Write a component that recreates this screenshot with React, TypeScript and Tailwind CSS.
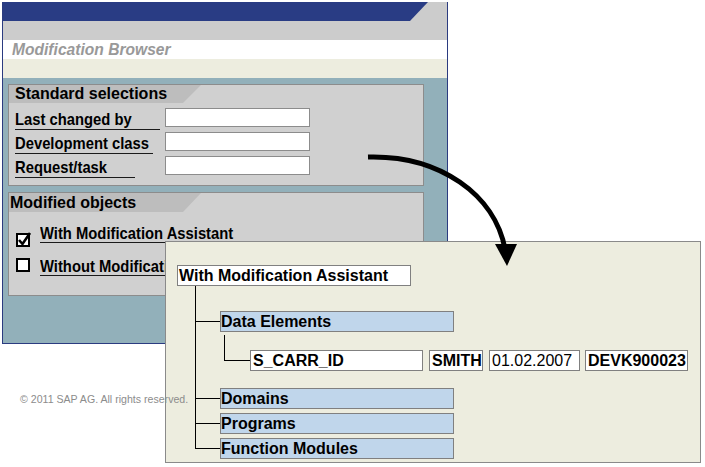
import React from "react";

const FONT = "font-['Liberation_Sans',Arial,Helvetica,sans-serif]";

function FieldRow({ label, line }: { label: string; line: string }) {
  return (
    <div className="flex h-[24px] items-start">
      <div className="w-[150px]">
        <div className={`${line} h-[22px] border-b border-[#1a1a1a] pt-[3px] leading-[18px]`}>
          <span className="inline-block origin-left scale-x-[0.87] whitespace-nowrap text-[17px] font-bold text-black">
            {label}
          </span>
        </div>
      </div>
      <div className="h-[19px] w-[145px] border border-[#8c8c8c] bg-white" />
    </div>
  );
}

function Tab({ text, pad, h }: { text: string; pad: string; h: string }) {
  return (
    <div
      className={`${h} w-[192px] bg-[#bdbdbd] ${pad} text-[16px] font-bold text-black [clip-path:polygon(0_0,192px_0,174px_100%,0_100%)]`}
    >
      {text}
    </div>
  );
}

function Check({ checked }: { checked?: boolean }) {
  return (
    <div className="relative h-[14px] w-[14px] shrink-0 border-2 border-black bg-white">
      {checked && (
        <svg className="absolute -left-[2px] -top-[5px] overflow-visible" width="16" height="18" viewBox="0 0 16 18">
          <polyline points="3,10 6.5,14 14,3" fill="none" stroke="black" strokeWidth="2.6" />
        </svg>
      )}
    </div>
  );
}

function Box({ text, w, bold = true, blue, pl = "pl-0" }: { text: string; w: string; bold?: boolean; blue?: boolean; pl?: string }) {
  return (
    <div
      className={`${w} h-[21px] shrink-0 border border-[#808080] ${blue ? "bg-[#c0d6eb]" : "bg-white"} ${pl} whitespace-nowrap text-[16px] leading-[19px] text-black ${bold ? "font-bold" : "font-normal"}`}
    >
      {text}
    </div>
  );
}

function Branch({ children, mt }: { children: React.ReactNode; mt: string }) {
  return (
    <div className={`flex items-center ${mt}`}>
      <div className="h-px w-[25px] bg-black" />
      {children}
    </div>
  );
}

export default function App() {
  return (
    <div className={`relative h-[467px] w-[705px] overflow-hidden bg-white ${FONT}`}>
      {/* main SAP window */}
      <div className="absolute left-[2px] top-[2px] flex h-[342px] w-[446px] flex-col border-x border-b border-[#2b3b80] bg-[#92b0ba]">
        <div className="h-[19px] bg-[#cccccc]">
          <div className="h-full bg-[#293c84] [clip-path:polygon(0_0,425px_0,407px_100%,0_100%)]" />
        </div>
        <div className="h-[19px] bg-[#cccccc]" />
        <div className="h-[19px] bg-white pl-[9px] text-[15.6px] font-bold italic leading-[20px] text-[#999999]">
          Modification Browser
        </div>
        <div className="h-[19px] bg-[#ededdf]" />
        <div className="flex-1 px-[5px] pt-[6px]">
          <div className="h-[102px] w-[416px] border border-[#8c8c8c] bg-[#d0d0d0]">
            <Tab text="Standard selections" pad="pl-[6px]" h="h-[18px] leading-[18px]" />
            <div className="pl-[6px] pt-[5px]">
              <FieldRow label="Last changed by" line="w-[145px]" />
              <FieldRow label="Development class" line="w-[138px]" />
              <FieldRow label="Request/task" line="w-[120px]" />
            </div>
          </div>
          <div className="mt-[6px] h-[104px] w-[416px] border border-[#8c8c8c] bg-[#d0d0d0]">
            <Tab text="Modified objects" pad="pl-[1px]" h="h-[19px] leading-[19px]" />
            <div className="pl-[7px] pt-[13px]">
              <div className="flex items-start">
                <div className="mt-[8px]">
                  <Check checked />
                </div>
                <div className="ml-[10px] h-[18px] border-b border-[#1a1a1a] leading-[17px]">
                  <span className="inline-block origin-left scale-x-[0.87] whitespace-nowrap text-[17px] font-bold text-black">
                    With Modification Assistant
                  </span>
                </div>
              </div>
              <div className="mt-[11px] flex items-start">
                <Check />
                <div className="ml-[10px] h-[18px] w-[230px] border-b border-[#1a1a1a] leading-[17px]">
                  <span className="inline-block origin-left scale-x-[0.87] whitespace-nowrap text-[17px] font-bold text-black">
                    Without Modification Assistant
                  </span>
                </div>
              </div>
            </div>
          </div>
        </div>
      </div>

      {/* detail window */}
      <div className="absolute left-[165px] top-[241px] h-[222px] w-[536px] border border-[#8a8a8a] bg-[#ededdf] pl-[11px] pt-[23px]">
        <Box text="With Modification Assistant" w="w-[234px]" pl="pl-[1px]" />
        <div className="relative ml-[18px] flex flex-col pt-[25px]">
          <div className="absolute bottom-[10px] left-0 top-0 w-px bg-black" />
          <Branch mt="mt-0">
            <Box text="Data Elements" w="w-[234px]" blue />
          </Branch>
          <div className="relative ml-[29px] mt-[3px]">
            <div className="absolute left-0 top-0 h-[26px] w-px bg-black" />
            <div className="flex items-center pt-[15px]">
              <div className="h-px w-[26px] bg-black" />
              <Box text="S_CARR_ID" w="w-[173px]" pl="pl-[2px]" />
              <div className="ml-[6px]">
                <Box text="SMITH" w="w-[54px]" pl="pl-[2px]" />
              </div>
              <div className="ml-[6px]">
                <Box text="01.02.2007" w="w-[91px]" bold={false} pl="pl-[2px]" />
              </div>
              <div className="ml-[5px]">
                <Box text="DEVK900023" w="w-[103px]" pl="pl-[2px]" />
              </div>
            </div>
          </div>
          <Branch mt="mt-[17px]">
            <Box text="Domains" w="w-[234px]" blue />
          </Branch>
          <Branch mt="mt-[4px]">
            <Box text="Programs" w="w-[234px]" blue />
          </Branch>
          <Branch mt="mt-[4px]">
            <Box text="Function Modules" w="w-[234px]" blue />
          </Branch>
        </div>
      </div>

      <div className="absolute left-[20px] top-[393px] whitespace-nowrap text-[10.6px] leading-[12px] text-[#8c8c8c]">
        © 2011 SAP AG. All rights reserved.
      </div>

      {/* arrow */}
      <svg className="pointer-events-none absolute inset-0" width="705" height="467" viewBox="0 0 705 467">
        <path d="M368 157 C 440 155, 495 195, 505 249" fill="none" stroke="black" strokeWidth="5" />
        <polygon points="495,244 517,244 507,266" fill="black" />
      </svg>
    </div>
  );
}
